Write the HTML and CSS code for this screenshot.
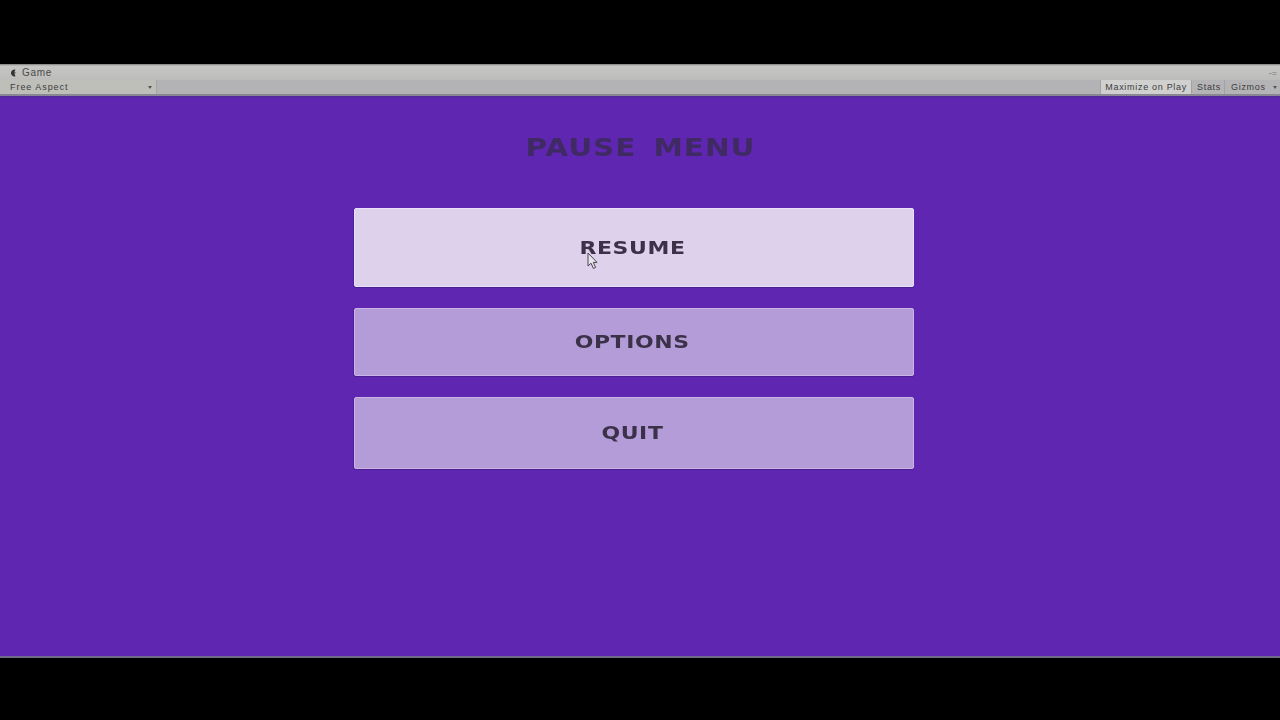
FILE: index.html
```html
<!DOCTYPE html>
<html lang="en">
<head>
<meta charset="utf-8">
<title>Pause Menu</title>
<link rel="stylesheet" href="styles.css">
</head>
<body>
<main class="window">
  <div class="titlebar">
    <span class="tab">
      <svg class="tab-icon" viewBox="0 0 8 8" width="8" height="8"><path d="M6.5 .8A3.4 3.4 0 1 0 6.5 7.2L5.2 4.6 7.5 4 5.2 3.2Z" fill="#333"/></svg>
      <span>Game</span>
    </span>
    <span class="win-ctl">-=</span>
  </div>
  <div class="toolbar">
    <div class="aspect"><span>Free Aspect</span><span class="caret"></span></div>
    <div class="tools">
      <span class="tool tool-on">Maximize on Play</span>
      <span class="tool tool-stats">Stats</span>
      <span class="tool tool-gizmos">Gizmos<span class="caret"></span></span>
    </div>
  </div>
  <div class="game">
    <h1 class="heading"><span class="heading-text">PAUSE MENU</span></h1>
    <div class="menu">
      <div class="btn btn-active"><span class="label">RESUME</span>
        <svg class="cursor" viewBox="0 0 12 18" width="12" height="18"><path d="M1 1V14L4 11.2 6.4 16.5 8.6 15.5 6.3 10.4H10Z" fill="#e8e4ee" stroke="#4a4450" stroke-width="1"/></svg>
      </div>
      <div class="btn btn-options"><span class="label">OPTIONS</span></div>
      <div class="btn btn-quit"><span class="label">QUIT</span></div>
    </div>
  </div>
</main>
</body>
</html>
```

FILE: styles.css
```css
* { box-sizing: border-box; }
html, body { margin: 0; height: 100%; }
body {
  background: #000;
  padding: 64px 0 62px;
  font-family: "Liberation Sans", Arial, sans-serif;
  overflow: hidden;
}
.window {
  height: 594px;
  display: flex;
  flex-direction: column;
  border-bottom: 2px solid #6f6a85;
}
.titlebar {
  height: 16px;
  flex: none;
  display: flex;
  justify-content: space-between;
  align-items: center;
  padding: 1px 3px 0 9px;
  background: linear-gradient(#7d7d7d 0, #c6c6c4 2px, #bcbcba 100%);
  color: #4a4a4a;
  font-size: 10px;
}
.tab { display: flex; align-items: center; gap: 5px; letter-spacing: .7px; }
.tab-icon { display: block; }
.win-ctl { font-size: 9px; color: #777; }
.toolbar {
  height: 16px;
  flex: none;
  display: flex;
  justify-content: space-between;
  background: #b3b3b6;
  border-bottom: 2px solid #8b8792;
  color: #3c3c3c;
  font-size: 9px;
  letter-spacing: .7px;
}
.aspect {
  width: 157px;
  display: flex;
  justify-content: space-between;
  align-items: center;
  padding: 0 4px 0 10px;
  background: #bfbfba;
  border-right: 1px solid #a5a5a5;
  letter-spacing: .95px;
}
.caret {
  display: inline-block;
  width: 0;
  height: 0;
  border: 2px solid transparent;
  border-top: 3px solid #555;
  margin-top: 2px;
}
.tools { display: flex; }
.tool {
  display: flex;
  align-items: center;
  padding: 0 5px;
  background: #b4b4b6;
  border-left: 1px solid #a2a2a4;
}
.tool-on { background: #d0d0cf; padding: 0 4px 0 4px; }
.tool-stats { padding-right: 3px; }
.tool-gizmos { width: 56px; justify-content: space-between; padding: 0 3px 0 6px; }
.game {
  flex: 1;
  background: linear-gradient(#4f2a96 0, #5f27b1 3px);
  display: flex;
  flex-direction: column;
}
.heading {
  margin: 0;
  padding: 38px 0 0;
  height: 112px;
  text-align: center;
  font-family: "DejaVu Sans", sans-serif;
  font-weight: 700;
  font-size: 25px;
  line-height: 28px;
  letter-spacing: .8px;
  word-spacing: 5px;
  color: #3f2a63;
}
.heading-text {
  display: inline-block;
  transform: scaleX(1.18);
  filter: blur(.6px);
}
.menu {
  width: 560px;
  margin-left: 354px;
  display: flex;
  flex-direction: column;
  gap: 21px;
}
.btn {
  position: relative;
  display: flex;
  align-items: center;
  justify-content: center;
  border-radius: 2px;
  border: 1px solid #cdb4e6;
  box-shadow: 0 1px 0 #4a1f92, -1px 0 0 #4f1f9c;
  padding-right: 3px;
}
.btn-active { height: 79px; background: #ddd1ec; border-color: #eadffa; }
.btn-options { height: 68px; background: #b49cd8; padding-bottom: 2px; }
.btn-quit { height: 72px; background: #b49cd8; padding-bottom: 2px; }
.label {
  display: inline-block;
  transform: scaleX(1.22);
  font-family: "DejaVu Sans", sans-serif;
  font-weight: 700;
  font-size: 18px;
  letter-spacing: .5px;
  color: #3b3148;
  filter: blur(.4px);
}
.cursor {
  position: absolute;
  left: 232px;
  top: 43px;
}
```
